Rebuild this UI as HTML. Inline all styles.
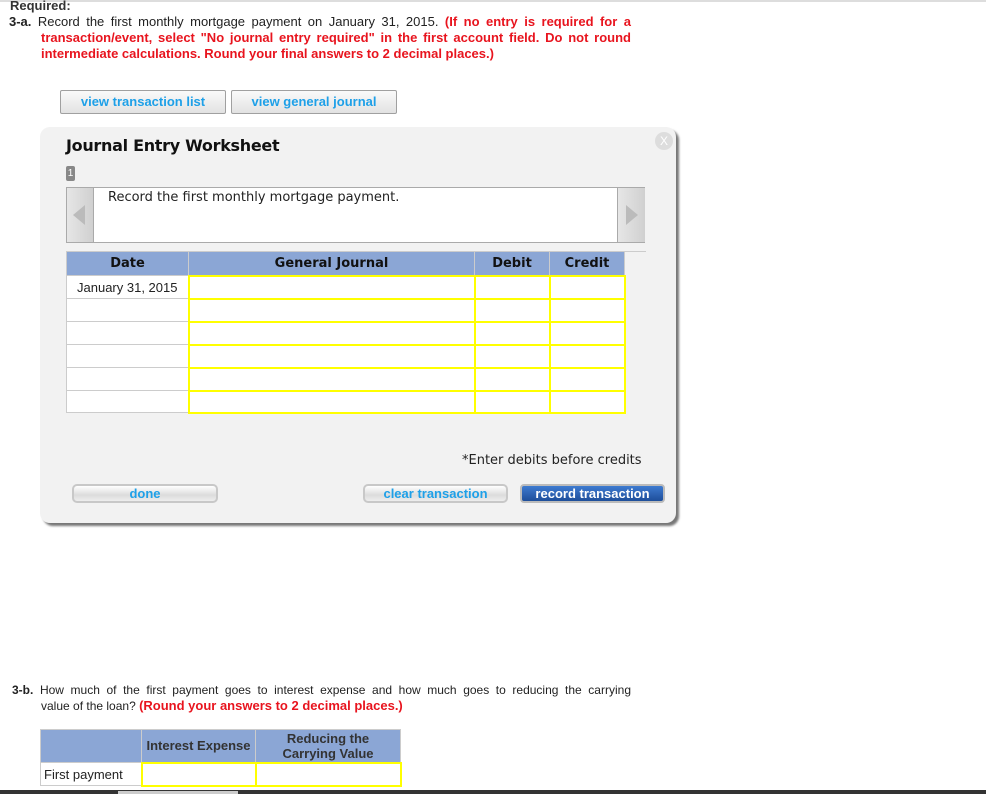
<!DOCTYPE html>
<html><head><meta charset="utf-8"><style>
body{margin:0;width:986px;height:794px;background:#fff;font-family:"Liberation Sans",Arial,sans-serif;position:relative;overflow:hidden;color:#222}
.a{position:absolute}
.red{color:#e8141e;font-weight:bold}
.just{text-align:justify;text-align-last:justify}
.btn{position:absolute;height:22px;border:1px solid #a0a0a0;border-radius:2px;background:linear-gradient(#fafafa,#e2e2e2);color:#1ea0e8;font-size:13px;font-weight:bold;text-align:center;line-height:22px;box-sizing:border-box}
.pill{position:absolute;height:19px;border:2px solid #c8c8c8;border-radius:5px;background:linear-gradient(#fff,#dcdcdc 60%,#eee);color:#1ea0e8;font-size:13px;font-weight:bold;text-align:center;line-height:15px;box-sizing:border-box}
table{border-collapse:collapse;position:absolute}
td{box-sizing:border-box;padding:0}
</style></head><body>
<div class="a" style="left:0;top:0;width:986px;height:2px;background:#ddd"></div>
<div class="a" style="left:10px;top:-2px;font-size:13px;font-weight:bold;color:#333">Required:</div>
<div class="a just" style="left:9px;top:14px;width:622px;font-size:13px;line-height:16px">
<b>3-a.</b> Record the first monthly mortgage payment on January 31, 2015. <span class="red">(If no entry is required for a</span></div>
<div class="a just" style="left:41px;top:30px;width:590px;font-size:13px;line-height:16px"><span class="red">transaction/event, select "No journal entry required" in the first account field. Do not round</span></div>
<div class="a" style="left:41px;top:46px;font-size:13px;line-height:16px"><span class="red">intermediate calculations. Round your final answers to 2 decimal places.)</span></div>

<div class="btn" style="left:60px;top:90px;width:166px;height:24px;line-height:22px">view transaction list</div>
<div class="btn" style="left:231px;top:90px;width:166px;height:24px;line-height:22px">view general journal</div>

<div class="a" style="left:40px;top:127px;width:636px;height:396px;background:#f2f2f2;border-radius:10px;box-shadow:3px 3px 2px #777"></div>
<div class="a" style="left:655px;top:132px;width:18px;height:18px;border-radius:50%;background:#ddd;color:#fff;font-size:12px;text-align:center;line-height:18px">X</div>
<div class="a" style="left:66px;top:136px;font-size:16px;font-weight:bold;color:#111;font-family:'DejaVu Sans',sans-serif;letter-spacing:-0.3px">Journal Entry Worksheet</div>
<div class="a" style="left:66px;top:166px;width:9px;height:15px;background:#888;border-radius:2px;color:#fff;font-size:10px;text-align:center;line-height:15px">1</div>
<div class="a" style="left:66px;top:187px;width:579px;height:56px;background:#fff;border:1px solid #aaa;box-sizing:border-box"></div>
<div class="a" style="left:67px;top:188px;width:26px;height:54px;background:linear-gradient(90deg,#e6e6e6,#d0d0d0);border-right:1px solid #aaa"></div>
<div class="a" style="left:73px;top:205px;width:0;height:0;border-top:10px solid transparent;border-bottom:10px solid transparent;border-right:12px solid #bbb"></div>
<div class="a" style="left:617px;top:188px;width:27px;height:54px;background:linear-gradient(90deg,#e6e6e6,#d0d0d0);border-left:1px solid #aaa"></div>
<div class="a" style="left:626px;top:205px;width:0;height:0;border-top:10px solid transparent;border-bottom:10px solid transparent;border-left:12px solid #bbb"></div>
<div class="a" style="left:108px;top:190px;font-size:13px;font-family:'DejaVu Sans',sans-serif;color:#222">Record the first monthly mortgage payment.</div>
<div class="a" style="left:624px;top:251px;width:22px;height:1px;background:#ccc"></div>

<table style="left:66px;top:251px;font-size:13px">
<tr style="height:24px;background:#8ba6d5;font-weight:bold;font-family:'DejaVu Sans',sans-serif;color:#111">
<td style="width:122px;text-align:center;border:1px solid #ccc">Date</td>
<td style="width:286px;text-align:center;border:1px solid #ccc">General Journal</td>
<td style="width:75px;text-align:center;border:1px solid #ccc">Debit</td>
<td style="width:75px;text-align:center;border:1px solid #ccc">Credit</td></tr>
<tr style="height:23px"><td style="background:#fff;border:1px solid #ccc;text-align:center;font-size:13px">January 31, 2015</td><td style="background:#fff;border:2px solid #ff0"></td><td style="background:#fff;border:2px solid #ff0"></td><td style="background:#fff;border:2px solid #ff0"></td></tr>
<tr style="height:23px"><td style="background:#fff;border:1px solid #ccc"></td><td style="background:#fff;border:2px solid #ff0"></td><td style="background:#fff;border:2px solid #ff0"></td><td style="background:#fff;border:2px solid #ff0"></td></tr>
<tr style="height:23px"><td style="background:#fff;border:1px solid #ccc"></td><td style="background:#fff;border:2px solid #ff0"></td><td style="background:#fff;border:2px solid #ff0"></td><td style="background:#fff;border:2px solid #ff0"></td></tr>
<tr style="height:23px"><td style="background:#fff;border:1px solid #ccc"></td><td style="background:#fff;border:2px solid #ff0"></td><td style="background:#fff;border:2px solid #ff0"></td><td style="background:#fff;border:2px solid #ff0"></td></tr>
<tr style="height:23px"><td style="background:#fff;border:1px solid #ccc"></td><td style="background:#fff;border:2px solid #ff0"></td><td style="background:#fff;border:2px solid #ff0"></td><td style="background:#fff;border:2px solid #ff0"></td></tr>
<tr style="height:22px"><td style="background:#fff;border:1px solid #ccc"></td><td style="background:#fff;border:2px solid #ff0"></td><td style="background:#fff;border:2px solid #ff0"></td><td style="background:#fff;border:2px solid #ff0"></td></tr>
</table>

<div class="a" style="left:462px;top:453px;font-size:13px;font-family:'DejaVu Sans',sans-serif;color:#222">*Enter debits before credits</div>
<div class="pill" style="left:72px;top:484px;width:146px">done</div>
<div class="pill" style="left:363px;top:484px;width:145px">clear transaction</div>
<div class="pill" style="left:520px;top:484px;width:145px;border-color:#bbb;background:linear-gradient(#3d7ad0,#1e4e9a);color:#fff;border-radius:4px">record transaction</div>

<div class="a just" style="left:12px;top:682px;width:619px;font-size:12px;line-height:16px"><b>3-b.</b> How much of the first payment goes to interest expense and how much goes to reducing the carrying</div>
<div class="a" style="left:41px;top:698px;font-size:12px;line-height:16px">value of the loan? <span class="red" style="font-size:13px">(Round your answers to 2 decimal places.)</span></div>

<table style="left:40px;top:729px;font-size:13px">
<tr style="height:33px;background:#8ba6d5;font-weight:bold;color:#333;line-height:15px">
<td style="width:101px;border:1px solid #ccc"></td>
<td style="width:114px;border:1px solid #ccc;text-align:center">Interest Expense</td>
<td style="width:145px;border:1px solid #ccc;text-align:center">Reducing the<br>Carrying Value</td></tr>
<tr style="height:23px"><td style="border:1px solid #ccc;padding-left:3px">First payment</td><td style="border:2px solid #ff0"></td><td style="border:2px solid #ff0"></td></tr>
</table>
<div class="a" style="left:0;top:790px;width:986px;height:4px;background:#333"></div>
<div class="a" style="left:118px;top:791px;width:120px;height:3px;background:#ccc"></div>
</body></html>
